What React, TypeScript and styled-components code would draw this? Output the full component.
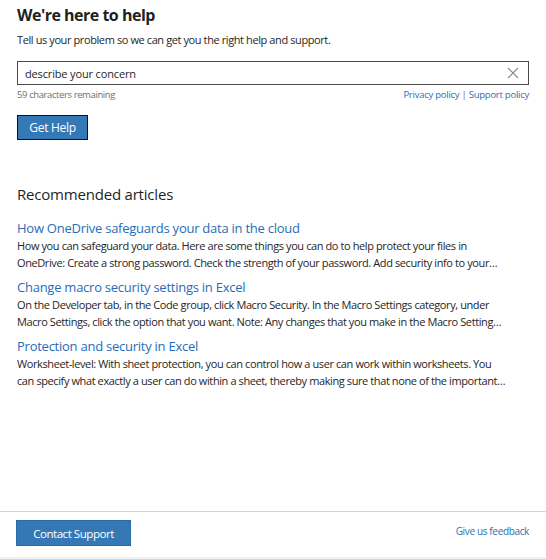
import React from 'react';
import styled, { createGlobalStyle } from 'styled-components';

const GlobalStyle = createGlobalStyle`
  html, body {
    margin: 0;
    padding: 0;
    background: #ffffff;
    font-family: "Open Sans", "Noto Sans", Arial, sans-serif;
    color: #262626;
  }
`;

const Page = styled.div`
  display: flex;
  flex-direction: column;
  height: 559px;
  background: #fff;
`;

const Main = styled.main`
  flex: 1;
  padding: 2px 17px 0 17px;
`;

const Title = styled.h1`
  margin: 0;
  font-size: 16px;
  line-height: 26px;
  font-weight: 700;
  letter-spacing: -0.5px;
  color: #1f1f1f;
`;

const Intro = styled.p`
  margin: 4px 0 0;
  font-size: 11px;
  line-height: 16px;
  letter-spacing: -0.4px;
  color: #262626;
`;

const InputBox = styled.div`
  margin-top: 13px;
  height: 24px;
  box-sizing: border-box;
  border: 1px solid #4a4a4a;
  display: flex;
  align-items: center;
  padding: 0 8px 0 7px;
`;

const Input = styled.input`
  flex: 1;
  border: none;
  outline: none;
  font-family: inherit;
  font-size: 11px;
  letter-spacing: -0.15px;
  color: #262626;
  padding: 0;
  background: transparent;
`;

const ClearButton = styled.button`
  border: none;
  background: none;
  padding: 0;
  width: 14px;
  height: 14px;
  display: flex;
  align-items: center;
  justify-content: center;
  cursor: pointer;
`;

const MetaRow = styled.div`
  display: flex;
  justify-content: space-between;
  align-items: center;
  margin-top: 3px;
  font-size: 9.5px;
  line-height: 14px;
`;

const Remaining = styled.span`
  color: #707070;
  letter-spacing: -0.4px;
`;

const Policies = styled.span`
  color: #6a6a6a;
  letter-spacing: -0.25px;
`;

const SmallLink = styled.a`
  color: #2e6db0;
  text-decoration: none;
`;

const PrimaryButton = styled.button<{ $framed?: boolean }>`
  box-sizing: border-box;
  background: #3479b6;
  color: #fff;
  font-family: inherit;
  font-size: 12px;
  letter-spacing: -0.3px;
  white-space: nowrap;
  border: 1px solid ${({ $framed }) => ($framed ? '#111' : '#2d6aa3')};
  padding: 0;
  cursor: pointer;
`;

const GetHelp = styled(PrimaryButton)`
  margin-top: 13px;
  height: 25px;
  width: 71px;
`;

const SectionTitle = styled.h2`
  margin: 43px 0 0;
  font-size: 15px;
  line-height: 22px;
  font-weight: 400;
  letter-spacing: -0.2px;
  color: #1f1f1f;
`;

const ArticleList = styled.div`
  display: flex;
  flex-direction: column;
  gap: 8px;
  margin-top: 15px;
`;

const Article = styled.div`
  display: flex;
  flex-direction: column;
`;

const ArticleTitle = styled.a`
  font-size: 13px;
  line-height: 17px;
  letter-spacing: -0.25px;
  color: #1f6dba;
  text-decoration: none;
`;

const ArticleText = styled.p`
  margin: 0;
  max-width: 489px;
  font-size: 11px;
  line-height: 17px;
  letter-spacing: -0.4px;
  color: #262626;
  display: -webkit-box;
  -webkit-line-clamp: 2;
  -webkit-box-orient: vertical;
  overflow: hidden;
`;

const Footer = styled.footer`
  border-top: 1px solid #d2d2d2;
  display: flex;
  justify-content: space-between;
  align-items: flex-start;
  padding: 8px 17px 11px 16px;
`;

const ContactButton = styled(PrimaryButton)`
  height: 26px;
  width: 115px;
  font-size: 11.5px;
  letter-spacing: -0.45px;
`;

const Feedback = styled(SmallLink)`
  font-size: 10px;
  letter-spacing: -0.35px;
  margin-top: 4px;
`;

const BottomStrip = styled.div`
  height: 2px;
  background: #f0f0f0;
`;

const articles = [
  {
    title: 'How OneDrive safeguards your data in the cloud',
    text: 'How you can safeguard your data. Here are some things you can do to help protect your files in OneDrive: Create a strong password. Check the strength of your password. Add security info to your Microsoft account.',
  },
  {
    title: 'Change macro security settings in Excel',
    text: 'On the Developer tab, in the Code group, click Macro Security. In the Macro Settings category, under Macro Settings, click the option that you want. Note: Any changes that you make in the Macro Settings category apply only to Excel.',
  },
  {
    title: 'Protection and security in Excel',
    text: 'Worksheet-level: With sheet protection, you can control how a user can work within worksheets. You can specify what exactly a user can do within a sheet, thereby making sure that none of the important data is affected.',
  },
];

export default function App() {
  return (
    <Page>
      <GlobalStyle />
      <Main>
        <Title>We're here to help</Title>
        <Intro>Tell us your problem so we can get you the right help and support.</Intro>
        <InputBox>
          <Input defaultValue="describe your concern" />
          <ClearButton aria-label="Clear">
            <svg width="12" height="12" viewBox="0 0 12 12">
              <path d="M1 1 L11 11 M11 1 L1 11" stroke="#8a8a8a" strokeWidth="1.1" fill="none" />
            </svg>
          </ClearButton>
        </InputBox>
        <MetaRow>
          <Remaining>59 characters remaining</Remaining>
          <Policies>
            <SmallLink href="#">Privacy policy</SmallLink> | <SmallLink href="#">Support policy</SmallLink>
          </Policies>
        </MetaRow>
        <GetHelp $framed>Get Help</GetHelp>
        <SectionTitle>Recommended articles</SectionTitle>
        <ArticleList>
          {articles.map((a) => (
            <Article key={a.title}>
              <ArticleTitle href="#">{a.title}</ArticleTitle>
              <ArticleText>{a.text}</ArticleText>
            </Article>
          ))}
        </ArticleList>
      </Main>
      <Footer>
        <ContactButton>Contact Support</ContactButton>
        <Feedback href="#">Give us feedback</Feedback>
      </Footer>
      <BottomStrip />
    </Page>
  );
}
